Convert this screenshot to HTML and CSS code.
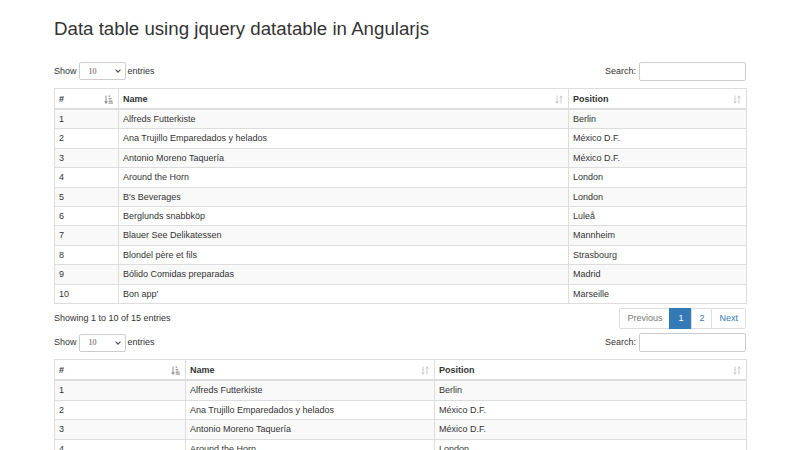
FILE: index.html
```html
<!DOCTYPE html>
<html lang="en">
<head>
    <meta charset="UTF-8">
    <meta name="viewport" content="width=device-width, initial-scale=1.0">
    <title>Data table using jquery datatable in Angularjs</title>
    <link rel="stylesheet" href="styles.css">
</head>
<body>
    <div class="container">
        <h1>Data table using jquery datatable in Angularjs</h1>

        <div class="dt-wrapper" id="table-one" data-cols="64,450,178"></div>
        <div class="dt-wrapper" id="table-two" data-cols="131,249,312"></div>
    </div>

    <script>
        const customers = [
            ['Alfreds Futterkiste', 'Berlin'],
            ['Ana Trujillo Emparedados y helados', 'México D.F.'],
            ['Antonio Moreno Taquería', 'México D.F.'],
            ['Around the Horn', 'London'],
            ["B's Beverages", 'London'],
            ['Berglunds snabbköp', 'Luleå'],
            ['Blauer See Delikatessen', 'Mannheim'],
            ['Blondel père et fils', 'Strasbourg'],
            ['Bólido Comidas preparadas', 'Madrid'],
            ["Bon app'", 'Marseille']
        ];

        const iconBoth = '<svg class="sort-icon both" width="8" height="9" viewBox="0 0 8 9">' +
            '<path d="M2 0.5V8M0.6 6.4L2 8.2L3.4 6.4M6 8.5V1M4.6 2.6L6 0.8L7.4 2.6" fill="none" stroke="currentColor" stroke-width="1"/></svg>';
        const iconAsc = '<svg class="sort-icon asc" width="9" height="9" viewBox="0 0 9 9">' +
            '<path d="M2 0.5V8M0.6 6.4L2 8.2L3.4 6.4" fill="none" stroke="currentColor" stroke-width="1.1"/>' +
            '<rect x="4.6" y="0.5" width="1.6" height="1.4" fill="currentColor"/>' +
            '<rect x="4.6" y="3" width="2.8" height="1.4" fill="currentColor"/>' +
            '<rect x="4.6" y="5.5" width="4" height="1.4" fill="currentColor"/>' +
            '<rect x="4.6" y="7.5" width="4.4" height="1.2" fill="currentColor"/></svg>';

        function buildTable(wrapper, withFooter) {
            const cols = wrapper.dataset.cols.split(',');
            let html = '<div class="dt-top">' +
                '<label>Show <span class="select-wrap"><select class="length"><option>10</option><option>25</option><option>50</option></select></span> entries</label>' +
                '<label>Search: <input type="search" class="search"></label></div>';

            html += '<table class="data-table"><colgroup>';
            cols.forEach(w => html += '<col style="width:' + w + 'px">');
            html += '</colgroup><thead><tr>' +
                '<th>#' + iconAsc + '</th><th>Name' + iconBoth + '</th><th>Position' + iconBoth + '</th>' +
                '</tr></thead><tbody>';
            customers.forEach((c, i) => {
                html += '<tr><td>' + (i + 1) + '</td><td>' + c[0] + '</td><td>' + c[1] + '</td></tr>';
            });
            html += '</tbody></table>';

            if (withFooter) {
                html += '<div class="dt-bottom"><span>Showing 1 to 10 of 15 entries</span>' +
                    '<ul class="pagination">' +
                    '<li class="disabled"><a>Previous</a></li>' +
                    '<li class="active"><a>1</a></li>' +
                    '<li><a>2</a></li>' +
                    '<li><a>Next</a></li></ul></div>';
            }
            wrapper.innerHTML = html;
        }

        buildTable(document.getElementById('table-one'), true);
        buildTable(document.getElementById('table-two'), true);
    </script>
</body>
</html>
```

FILE: styles.css
```css
body {
    font-family: "Liberation Sans", Arial, sans-serif;
    font-size: 9px;
    line-height: 1.43;
    margin: 0;
    padding: 0;
    background-color: #fff;
    color: #333;
}

.container {
    width: 692px;
    margin: 0 auto;
}

h1 {
    font-size: 18.7px;
    font-weight: normal;
    line-height: 1.1;
    margin: 19px 0 22px;
    color: #333;
}

.dt-top {
    display: flex;
    justify-content: space-between;
    align-items: center;
    height: 19px;
    margin-bottom: 7px;
}

.dt-top label {
    display: flex;
    align-items: center;
    gap: 2px;
}

.select-wrap {
    position: relative;
    display: inline-block;
}

.select-wrap::after {
    content: "";
    position: absolute;
    right: 6px;
    top: 6px;
    width: 3px;
    height: 3px;
    border-right: 1.3px solid #444;
    border-bottom: 1.3px solid #444;
    transform: rotate(45deg);
    pointer-events: none;
}

.length {
    -webkit-appearance: none;
    appearance: none;
    display: block;
    width: 47px;
    height: 18px;
    font-family: "Liberation Serif", serif;
    font-size: 8px;
    color: #555;
    padding: 0 0 0 9px;
    border: 1px solid #ccc;
    border-radius: 2px;
    background-color: #fff;
}

.search {
    width: 107px;
    height: 19px;
    box-sizing: border-box;
    border: 1px solid #ccc;
    border-radius: 2px;
    margin-left: 1px;
}

.data-table {
    width: 100%;
    table-layout: fixed;
    border-collapse: collapse;
    border: 1px solid #ddd;
}

.data-table th,
.data-table td {
    border: 1px solid #ddd;
    padding: 3px 4px;
    line-height: 12.4px;
    text-align: left;
}

.data-table th {
    position: relative;
    font-weight: bold;
    border-bottom: 2px solid #ddd;
    padding-top: 4px;
}

.data-table tbody tr:nth-child(odd) {
    background-color: #f9f9f9;
}

.sort-icon {
    position: absolute;
    right: 5px;
    top: 6px;
}

.sort-icon.both {
    color: #c8c8c8;
}

.sort-icon.asc {
    color: #999;
}

.dt-bottom {
    display: flex;
    justify-content: space-between;
    align-items: center;
    margin-top: 4px;
    margin-bottom: 4px;
}

.pagination {
    display: flex;
    list-style: none;
    margin: 0;
    padding: 0;
}

.pagination a {
    display: block;
    height: 19px;
    line-height: 19px;
    padding: 0 7px;
    color: #337ab7;
    border: 1px solid #ddd;
    margin-left: -1px;
    background-color: #fff;
}

.pagination li:first-child a {
    border-radius: 2px 0 0 2px;
    margin-left: 0;
}

.pagination li:last-child a {
    border-radius: 0 2px 2px 0;
}

.pagination .disabled a {
    color: #777;
    padding: 0 7px;
}

.pagination .active a {
    color: #fff;
    background-color: #337ab7;
    border-color: #337ab7;
    padding: 0 8px;
}
```
